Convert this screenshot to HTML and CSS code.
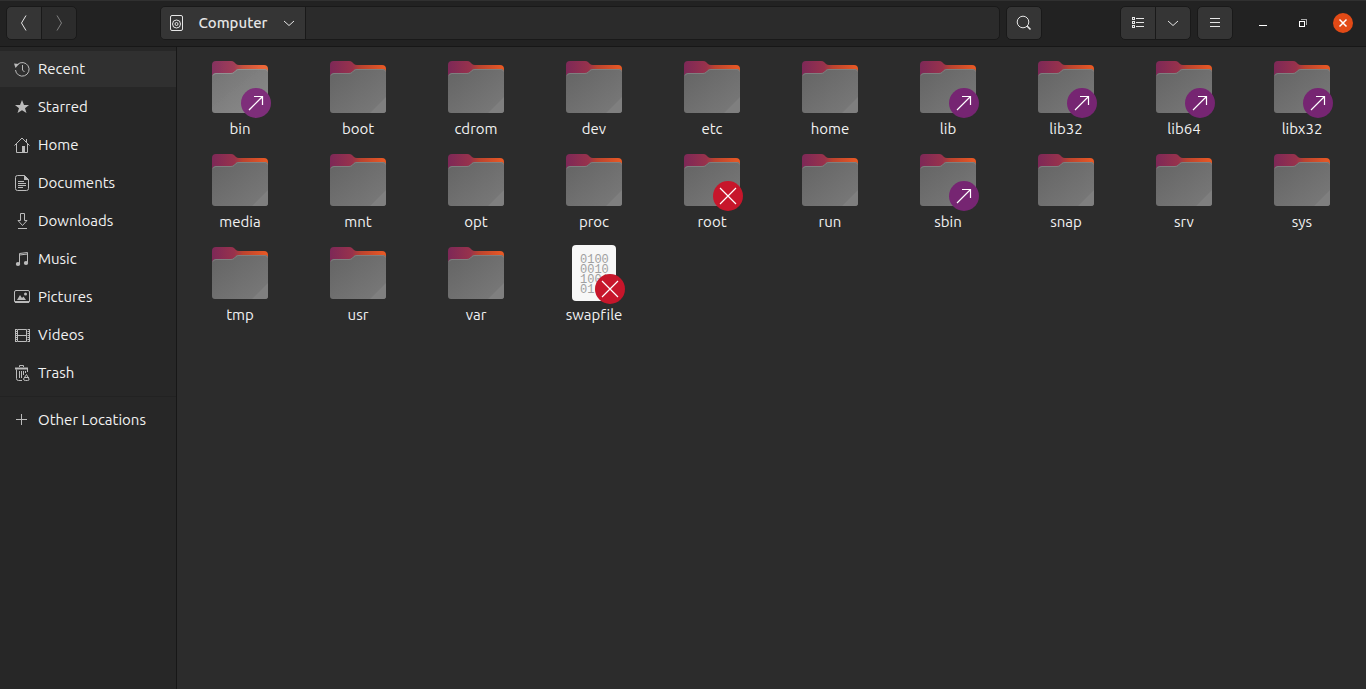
FILE: index.html
```html
<!DOCTYPE html>
<html lang="en">
<head>
  <meta charset="UTF-8">
  <title>Computer</title>
  <link rel="stylesheet" href="styles.css">
</head>
<body>
  <!-- shared file icons and emblems -->
  <svg class="defs" width="0" height="0" aria-hidden="true">
    <defs>
      <linearGradient id="back" x1="0" y1="0" x2="1" y2="0">
        <stop offset="0" stop-color="#7d2857"/>
        <stop offset="0.4" stop-color="#98324c"/>
        <stop offset="0.55" stop-color="#bb432f"/>
        <stop offset="1" stop-color="#ea5a24"/>
      </linearGradient>
      <linearGradient id="front" x1="0" y1="0" x2="1" y2="1">
        <stop offset="0" stop-color="#646464"/>
        <stop offset="1" stop-color="#7a7a7a"/>
      </linearGradient>
    </defs>
    <symbol id="folder" viewBox="0 0 64 62">
      <path fill="url(#back)" d="M4 22V8q0-4 4-4h15q2 0 3 1l2 2q1 1 3 1h25q4 0 4 4v10z"/>
      <path fill="url(#front)" d="M4 20q0-4 4-4h15q2 0 3-1l2-2q1-1 3-1h26q3 0 3 3v38q0 3-3 3H7q-3 0-3-3z"/>
      <path fill="none" stroke="#7f7f7f" d="M5 18.500q1-2 3-2h15q2 0 3-1l2-2q1-1 3-1h26q2 0 2.500 2"/>
      <path fill="#7f7f7f" d="M60 40v13q0 3-3 3H44z"/>
    </symbol>
    <symbol id="binary" viewBox="0 0 64 62">
      <rect x="10" y="2" width="44" height="56" rx="4" fill="#f7f7f7"/>
      <g class="digits">
        <text x="18" y="20">0100</text>
        <text x="18" y="30">0010</text>
        <text x="18" y="40">1001</text>
        <text x="18" y="50">0100</text>
      </g>
    </symbol>
    <symbol id="link" viewBox="0 0 64 62">
      <circle cx="48" cy="46" r="15" fill="#762572"/>
      <path fill="none" stroke="#fff" stroke-width="1.200" d="M41 53l13.500-13.500M46 39.500h8.500v8.500"/>
    </symbol>
    <symbol id="denied" viewBox="0 0 64 62">
      <circle cx="48" cy="46" r="15" fill="#c7162b"/>
      <path fill="none" stroke="#fff" stroke-width="1.200" d="M40 38l16 16M56 38l-16 16"/>
    </symbol>
  </svg>

  <header class="toolbar">
    <div class="group nav">
      <button aria-label="Back"><svg width="16" height="16" viewBox="0 0 16 16"><path d="M10 .5L5.500 8l4.500 7.500"/></svg></button>
      <button aria-label="Forward" disabled><svg width="16" height="16" viewBox="0 0 16 16"><path d="M6 .5L10.500 8L6 15.500"/></svg></button>
    </div>
    <div class="pathbar">
      <button class="location">
        <svg width="16" height="16" viewBox="0 0 16 16"><rect x="1.500" y=".5" width="12" height="15" rx="1.500"/><circle cx="7.500" cy="9" r="4"/><circle cx="7.500" cy="9" r="1.500"/></svg>
        <span>Computer</span>
        <svg width="16" height="16" viewBox="0 0 16 16"><path d="M3 6l5 4.500L13 6"/></svg>
      </button>
    </div>
    <button class="search" aria-label="Search"><svg width="16" height="16" viewBox="0 0 16 16"><circle cx="7" cy="7" r="5.800"/><path stroke-width="1.600" d="M11 11l3.500 3.500"/></svg></button>
    <div class="group view">
      <button aria-label="List view"><svg class="sharp" width="16" height="16" viewBox="0 0 16 16"><path d="M6 3.500h8M6 7.500h8M6 11.500h8M2.500 2.500h2v2h-2zM2.500 6.500h2v2h-2zM2.500 10.500h2v2h-2z"/></svg></button>
      <button aria-label="View options"><svg width="16" height="16" viewBox="0 0 16 16"><path d="M3 6l5 4.500L13 6"/></svg></button>
    </div>
    <button class="menu" aria-label="Menu"><svg class="sharp" width="16" height="16" viewBox="0 0 16 16"><path d="M3 3.500h10M3 7.500h10M3 11.500h10"/></svg></button>
    <div class="window-controls">
      <button aria-label="Minimize"><svg class="sharp" width="16" height="16" viewBox="0 0 16 16"><path d="M4 10.500h8"/></svg></button>
      <button aria-label="Restore"><svg class="sharp" width="16" height="16" viewBox="0 0 16 16"><path d="M4.500 6.500h5v5h-5z"/><path stroke="#aaa" d="M6 4.500h5.500V10"/></svg></button>
      <button aria-label="Close"><svg width="20" height="20" viewBox="0 0 20 20"><circle cx="10" cy="10" r="10" fill="#e24a16" stroke="none"/><path stroke-width="1.500" d="M6.500 6.500l7 7M13.500 6.500l-7 7"/></svg></button>
    </div>
  </header>

  <div class="content">
    <nav class="sidebar">
      <a class="active" href="#recent"><svg width="16" height="16" viewBox="0 0 16 16"><path d="M3.500 3.500A6.800 6.800 0 1 1 1.500 9"/><path d="M8.500 4v5l2 2"/><path fill="#bbb" stroke="none" d="M0 2.500l5 .5-3.500 4z"/></svg>Recent</a>
      <a href="#starred"><svg width="16" height="16" viewBox="0 0 16 16"><path fill="#bbb" stroke="none" d="M8 1l2 5h5l-4 3.300L12.500 14 8 11.200 3.500 14 5 9.300 1 6h5z"/></svg>Starred</a>
      <a href="#home"><svg width="16" height="16" viewBox="0 0 16 16"><path d="M.5 8.500L8 1l7.500 7.500M2.500 7v8.500h11V7M12.500 2v3"/><path fill="#bbb" stroke="none" d="M8 9h3v6H8z"/></svg>Home</a>
      <a href="#documents"><svg width="16" height="16" viewBox="0 0 16 16"><path d="M3.500.5h7l4 4v9q0 2-2 2h-9q-2 0-2-2v-11q0-2 2-2z"/><path d="M4 6.500h6M4 8.500h8M4 10.500h8M4 12.500h5"/><path fill="#bbb" stroke="none" d="M10 0v5h5z"/></svg>Documents</a>
      <a href="#downloads"><svg width="16" height="16" viewBox="0 0 16 16"><path d="M6.500.5h4v7h2.500L8.500 12.500 4 7.500h2.500zM4 15.500h9"/></svg>Downloads</a>
      <a href="#music"><svg width="16" height="16" viewBox="0 0 16 16"><path d="M5.500 13V2.500l8-1V11M5.500 4l8-1"/><g fill="#bbb" stroke="none"><ellipse cx="4" cy="13" rx="2.200" ry="2"/><ellipse cx="12" cy="12" rx="2.200" ry="2"/></g></svg>Music</a>
      <a href="#pictures"><svg width="16" height="16" viewBox="0 0 16 16"><rect x=".5" y="1.500" width="15" height="12" rx="1.500"/><path fill="#bbb" stroke="none" d="M3 11l3-5 2 3 1.500-1.500L12 11zM1 12h14v2H1z"/><circle cx="11.500" cy="5" r="1.500" fill="#bbb" stroke="none"/></svg>Pictures</a>
      <a href="#videos"><svg width="16" height="16" viewBox="0 0 16 16"><path d="M3.500 2.500h9v12h-9zM3.500 8.500h9"/><path stroke-width="2" stroke-dasharray="1 1" d="M2 2v13M14.500 2v13"/><path d="M1.500 2v13M15.500 2v13"/></svg>Videos</a>
      <a href="#trash"><svg width="16" height="16" viewBox="0 0 16 16"><path d="M5.500 2V.5h4V2M2.500 4.500v9q0 2 2 2H8M13.500 4v3M5.500 6v7M7.500 6v7M9.500 6v4M11.500 6v2"/><path stroke-width="2" d="M1 3.500h13"/><path d="M12.500 9.500L9.500 14q0 1.500 2 1.500h2q2 0 1.500-1.500zM11 12.500h4"/></svg>Trash</a>
      <hr>
      <a href="#other"><svg width="16" height="16" viewBox="0 0 16 16"><path d="M7.500 2v11M2 7.500h11"/></svg>Other Locations</a>
    </nav>

    <main class="files">
      <div class="item hover"><svg width="64" height="62"><use href="#folder"/><use href="#link"/></svg><span>bin</span></div>
      <div class="item"><svg width="64" height="62"><use href="#folder"/></svg><span>boot</span></div>
      <div class="item"><svg width="64" height="62"><use href="#folder"/></svg><span>cdrom</span></div>
      <div class="item"><svg width="64" height="62"><use href="#folder"/></svg><span>dev</span></div>
      <div class="item"><svg width="64" height="62"><use href="#folder"/></svg><span>etc</span></div>
      <div class="item"><svg width="64" height="62"><use href="#folder"/></svg><span>home</span></div>
      <div class="item"><svg width="64" height="62"><use href="#folder"/><use href="#link"/></svg><span>lib</span></div>
      <div class="item"><svg width="64" height="62"><use href="#folder"/><use href="#link"/></svg><span>lib32</span></div>
      <div class="item"><svg width="64" height="62"><use href="#folder"/><use href="#link"/></svg><span>lib64</span></div>
      <div class="item"><svg width="64" height="62"><use href="#folder"/><use href="#link"/></svg><span>libx32</span></div>
      <div class="item"><svg width="64" height="62"><use href="#folder"/></svg><span>media</span></div>
      <div class="item"><svg width="64" height="62"><use href="#folder"/></svg><span>mnt</span></div>
      <div class="item"><svg width="64" height="62"><use href="#folder"/></svg><span>opt</span></div>
      <div class="item"><svg width="64" height="62"><use href="#folder"/></svg><span>proc</span></div>
      <div class="item"><svg width="64" height="62"><use href="#folder"/><use href="#denied"/></svg><span>root</span></div>
      <div class="item"><svg width="64" height="62"><use href="#folder"/></svg><span>run</span></div>
      <div class="item"><svg width="64" height="62"><use href="#folder"/><use href="#link"/></svg><span>sbin</span></div>
      <div class="item"><svg width="64" height="62"><use href="#folder"/></svg><span>snap</span></div>
      <div class="item"><svg width="64" height="62"><use href="#folder"/></svg><span>srv</span></div>
      <div class="item"><svg width="64" height="62"><use href="#folder"/></svg><span>sys</span></div>
      <div class="item"><svg width="64" height="62"><use href="#folder"/></svg><span>tmp</span></div>
      <div class="item"><svg width="64" height="62"><use href="#folder"/></svg><span>usr</span></div>
      <div class="item"><svg width="64" height="62"><use href="#folder"/></svg><span>var</span></div>
      <div class="item"><svg width="64" height="62"><use href="#binary"/><use href="#denied"/></svg><span>swapfile</span></div>
    </main>
  </div>
</body>
</html>
```
FILE: styles.css
```css
* {
  box-sizing: border-box;
}

html, body {
  margin: 0;
  height: 100%;
}

body {
  display: flex;
  flex-direction: column;
  background: #2c2c2c;
  color: #f2f2f2;
  font: 15px/20px Ubuntu, "Noto Sans", sans-serif;
  font-variant-ligatures: none;
  overflow: hidden;
}

.defs {
  position: absolute;
}

svg {
  display: block;
  flex: none;
  fill: none;
  stroke: currentColor;
}

.sharp {
  shape-rendering: crispEdges;
}

/* toolbar */
.toolbar {
  display: flex;
  align-items: center;
  height: 47px;
  padding: 0 3px 1px 6px;
  background: #222;
  border-top: 1px solid #303030;
  border-bottom: 1px solid #171717;
}

button {
  display: flex;
  align-items: center;
  justify-content: center;
  width: 36px;
  height: 34px;
  padding: 0;
  background: #353535;
  border: 1px solid #191919;
  border-radius: 5px;
  color: #e6e6e6;
  font: inherit;
}

button:disabled {
  background: #2c2c2c;
  color: #808080;
}

.group {
  display: flex;
}

.group button:first-child {
  border-radius: 5px 0 0 5px;
}

.group button:last-child {
  margin-left: -1px;
  border-radius: 0 5px 5px 0;
}

.pathbar {
  flex: 1;
  height: 34px;
  margin: 0 6px 0 83px;
  background: #2b2b2b;
  border: 1px solid #191919;
  border-radius: 5px;
}

.pathbar .location {
  width: 145px;
  height: 32px;
  padding: 0 8px;
  justify-content: space-between;
  border-width: 0 1px 0 0;
  border-radius: 4px 0 0 4px;
  font-weight: 500;
}

.view {
  margin: 0 6px 0 78px;
}

.window-controls {
  display: flex;
  margin-left: 10px;
}

.window-controls button {
  width: 40px;
  background: none;
  border: none;
  color: #fff;
}

/* content */
.content {
  display: flex;
  flex: 1;
  min-height: 0;
}

.sidebar {
  display: flex;
  flex-direction: column;
  gap: 2px;
  width: 177px;
  padding-top: 4px;
  background: #272727;
  border-right: 1px solid #171717;
}

.sidebar a {
  display: flex;
  align-items: center;
  gap: 8px;
  height: 36px;
  padding: 0 14px;
  color: inherit;
  text-decoration: none;
}

.sidebar a.active {
  background: #303030;
}

.sidebar svg {
  color: #bbb;
}

.sidebar hr {
  width: 100%;
  height: 1px;
  margin: 3px 0;
  background: #222;
  border: none;
}

.files {
  display: grid;
  flex: 1;
  grid-template-columns: repeat(auto-fill, 118px);
  align-content: start;
  gap: 11px 0;
  padding: 10px 0 0 4px;
}

.item {
  display: flex;
  flex-direction: column;
  align-items: center;
}

.item svg {
  stroke: none;
}

.item.hover svg {
  filter: brightness(1.15) saturate(0.85);
}

.digits {
  fill: #a0a0a0;
  font: 12px "Liberation Mono", monospace;
}
```
